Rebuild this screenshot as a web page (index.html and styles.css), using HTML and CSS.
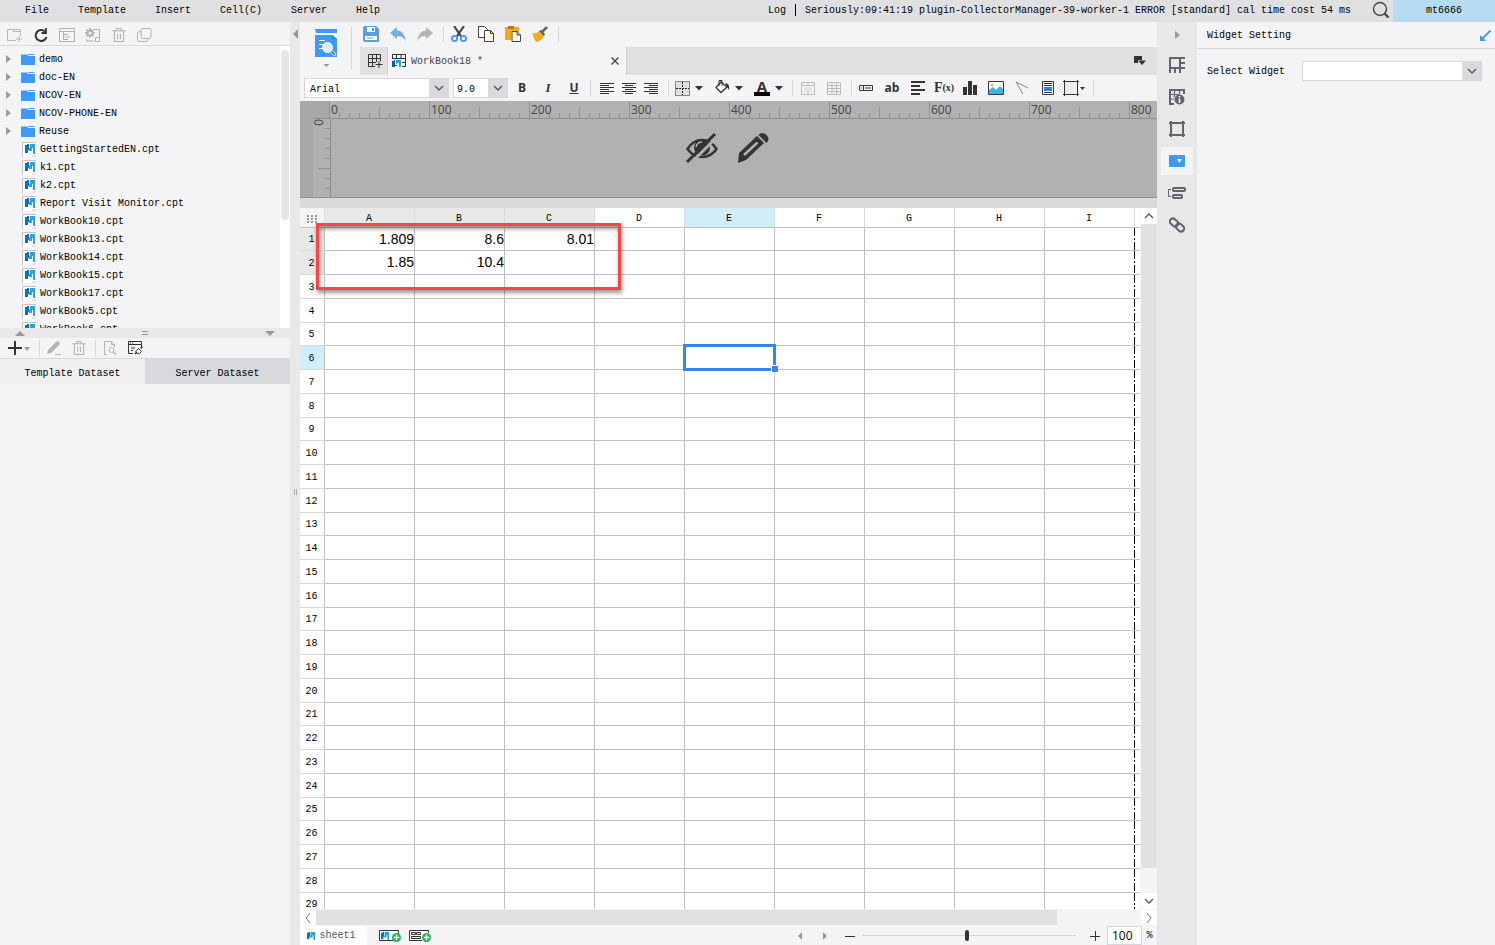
FILE: index.html
```html
<!DOCTYPE html>
<html lang="en">
<head>
  <meta charset="UTF-8">
  <meta name="viewport" content="width=device-width, initial-scale=1.0">
  <title>WorkBook18</title>
  <link rel="stylesheet" href="styles.css">
</head>
<body>
  <svg class="defs" width="0" height="0" aria-hidden="true">
    <symbol id="folder" viewBox="0 0 14 12"><path d="M0 1h6l1.500 1.500H14V11.500H0z" fill="#3d99fb"/><path d="M6.500 0.500H13.500v1H8z" fill="#3d99fb"/></symbol>
    <symbol id="logo" viewBox="0 0 10 10"><path d="M0 1h2V0h2v6H3v3H0z" fill="#0b6fc4"/><path d="M5 0h5v10H8V4H7v3H4V4h1z" fill="#27a3e4"/></symbol>
    <symbol id="cpt" viewBox="0 0 14 15"><path d="M0 0h14v15H0z" fill="#fff"/><path d="M.5 15V.5H14M10 14h4" fill="none" stroke="#c4c4c4"/><use href="#logo" x="3" y="2" width="10" height="10"/></symbol>
    <symbol id="chevron" viewBox="0 0 10 6"><path d="M1 1l4 4 4-4" fill="none" stroke="#555" stroke-width="1.300"/></symbol>
    <symbol id="caret" viewBox="0 0 8 5"><path d="M0 0h8L4 4.500z" fill="currentColor"/></symbol>
    <symbol id="right" viewBox="0 0 5 10"><path d="M0 1l5 4-5 4z" fill="#9c9c9c"/></symbol>
    <symbol id="trash" viewBox="0 0 14 15"><path d="M0 3h14M4.500 3V.5h5V3M2 3v11.500h10V3M5.500 6v6M8.500 6v6" fill="none" stroke="currentColor"/></symbol>
    <symbol id="plus-badge" viewBox="0 0 10 10"><circle cx="5" cy="5" r="5" fill="#1eb955"/><path d="M5 2v6M2 5h6" stroke="#fff" stroke-width="1.500"/></symbol>
  </svg>

  <header class="menubar">
    <nav class="menus">
      <button>File</button><button>Template</button><button>Insert</button><button>Cell(C)</button><button>Server</button><button>Help</button>
    </nav>
    <div class="log"><span>Log</span><span class="bar"></span><span>Seriously:09:41:19 plugin-CollectorManager-39-worker-1 ERROR [standard] cal time cost 54 ms</span></div>
    <button class="search" aria-label="Search"><svg width="18" height="18" viewBox="0 0 18 18" fill="none" stroke="#444"><circle cx="8" cy="8" r="6.500" stroke-width="1.400"/><path d="M12.500 12.500l4 4" stroke-width="2.400"/></svg></button>
    <button class="user">mt6666</button>
  </header>

  <main class="workspace">
    <aside class="sidebar">
      <div class="tree-tools">
        <button aria-label="New folder"><svg width="16" height="14" viewBox="0 0 16 14" fill="none" stroke="#b8b8b8"><path d="M9 12.500H.5v-11h5l1 2h7V8M6 1.500h7.500v2M12 8v6M9 11h6"/></svg></button>
        <button aria-label="Refresh"><svg width="14" height="14" viewBox="0 0 14 14" fill="none" stroke="#333" stroke-width="2"><path d="M11 3.500A5.500 5.500 0 1 0 12.500 9"/><path d="M12 0v5H7.500" stroke-width="1.800"/></svg></button>
        <button aria-label="Explorer"><svg width="16" height="14" viewBox="0 0 16 14" fill="none" stroke="#b0b0b0"><path d="M.5.5h15v13H.5zM.5 3.500h15M4.500 4v8M4.500 6.500H9M4.500 11.500H9M6 9h5"/></svg></button>
        <button aria-label="Manage"><svg width="16" height="14" viewBox="0 0 16 14" fill="none" stroke="#b0b0b0"><circle cx="5" cy="5" r="2.500" stroke-width="2"/><path d="M5 0v2M5 8v2M0 5h2M8 5h2M1.500 1.500l1.500 1.500M7 7l1.500 1.500M8.500 1.500L7 3M3 7L1.500 8.500" stroke-width="1.500"/><path d="M9 1.500h5.500V9M1.500 11v2H9M10.500 9.500h4v4h-4z"/></svg></button>
        <button aria-label="Delete"><svg width="14" height="14" color="#a8a8a8"><use href="#trash"/></svg></button>
        <button aria-label="Copy"><svg width="15" height="14" viewBox="0 0 15 14" fill="none" stroke="#b0b0b0"><rect x="4" y=".5" width="10" height="10" rx="2"/><path d="M4 3.500H2.500a2 2 0 0 0-2 2v6a2 2 0 0 0 2 2h6a2 2 0 0 0 2-2v-1"/></svg></button>
      </div>
      <div class="tree-wrap">
        <ul class="tree">
          <li class="dir"><svg class="arrow"><use href="#right"/></svg><svg class="pic"><use href="#folder"/></svg>demo</li>
          <li class="dir"><svg class="arrow"><use href="#right"/></svg><svg class="pic"><use href="#folder"/></svg>doc-EN</li>
          <li class="dir"><svg class="arrow"><use href="#right"/></svg><svg class="pic"><use href="#folder"/></svg>NCOV-EN</li>
          <li class="dir"><svg class="arrow"><use href="#right"/></svg><svg class="pic"><use href="#folder"/></svg>NCOV-PHONE-EN</li>
          <li class="dir"><svg class="arrow"><use href="#right"/></svg><svg class="pic"><use href="#folder"/></svg>Reuse</li>
          <li><svg class="pic"><use href="#cpt"/></svg>GettingStartedEN.cpt</li>
          <li><svg class="pic"><use href="#cpt"/></svg>k1.cpt</li>
          <li><svg class="pic"><use href="#cpt"/></svg>k2.cpt</li>
          <li><svg class="pic"><use href="#cpt"/></svg>Report Visit Monitor.cpt</li>
          <li><svg class="pic"><use href="#cpt"/></svg>WorkBook10.cpt</li>
          <li><svg class="pic"><use href="#cpt"/></svg>WorkBook13.cpt</li>
          <li><svg class="pic"><use href="#cpt"/></svg>WorkBook14.cpt</li>
          <li><svg class="pic"><use href="#cpt"/></svg>WorkBook15.cpt</li>
          <li><svg class="pic"><use href="#cpt"/></svg>WorkBook17.cpt</li>
          <li><svg class="pic"><use href="#cpt"/></svg>WorkBook5.cpt</li>
          <li><svg class="pic"><use href="#cpt"/></svg>WorkBook6.cpt</li>
        </ul>
        <div class="tree-scroll"><div class="tree-thumb"></div></div>
      </div>
      <div class="hsplit">
        <svg width="10" height="5" viewBox="0 0 10 5"><path d="M0 5l5-5 5 5z" fill="#999"/></svg>
        <svg width="6" height="4" viewBox="0 0 6 4"><path d="M0 .5h6M0 3.500h6" stroke="#999"/></svg>
        <svg width="10" height="5" viewBox="0 0 10 5"><path d="M0 0l5 5 5-5z" fill="#999"/></svg>
      </div>
      <div class="data-tools">
        <button aria-label="Add dataset"><svg width="22" height="14" viewBox="0 0 22 14"><path d="M7 0v14M0 7h14" stroke="#333" stroke-width="2"/><path d="M16 6h6l-3 4z" fill="#999"/></svg></button>
        <span class="sep"></span>
        <button aria-label="Edit"><svg width="14" height="14" viewBox="0 0 14 14"><path d="M0 13l1-4 8-8q1.500-1.500 3 0t0 3l-8 8z" fill="#b4b4b4"/><path d="M8 13.500h6" stroke="#b4b4b4"/></svg></button>
        <button aria-label="Remove"><svg width="14" height="14" color="#a8a8a8"><use href="#trash"/></svg></button>
        <span class="sep"></span>
        <button aria-label="Preview"><svg width="14" height="14" viewBox="0 0 14 14" fill="none" stroke="#b4b4b4"><path d="M4 13.500H1.500V.5h7l3 3V6M8.500.5v3h3"/><circle cx="8.500" cy="9" r="2.500"/><path d="M10.500 11l2.500 2.500" stroke-width="1.500"/></svg></button>
        <button aria-label="Connection"><svg width="15" height="14" viewBox="0 0 15 14" fill="none" stroke="#333"><path d="M5 12.500H.5V.5h13V7M.5 3.500h13M3 7h4M3 9.500h2M2 2h1M4 2h1"/><path d="M7 13l2-2M12.500 7.500l2-2" stroke-width="1.500"/><path d="M8.500 9.500l2-2 3 3-2 2q-1.500 1-3-.5t0-2.500z"/></svg></button>
      </div>
      <div class="data-tabs">
        <button class="active">Template Dataset</button>
        <button>Server Dataset</button>
      </div>
    </aside>

    <div class="vsplit">
      <svg width="5" height="10" viewBox="0 0 5 10"><path d="M5 0L0 5l5 5z" fill="#999"/></svg>
      <span class="grip"></span>
    </div>

    <section class="editor">
      <div class="top">
        <button class="preview" aria-label="Preview template">
          <svg width="22" height="38" viewBox="0 0 22 38"><path d="M0 0h22v4H1z" fill="#3d99fb"/><path d="M0 6h17l5 4v18H0z" fill="#3d99fb"/><path d="M17 6v4h5" fill="#2e7fd6"/><path d="M4 11.500h6M4 15.500h4M4 19.500h4" stroke="#fff"/><circle cx="12.500" cy="18.500" r="5" fill="#dcecfb" stroke="#fff"/><path d="M16.500 22.500l4 4" stroke="#fff" stroke-width="3"/><path d="M16.500 22.500l3.500 3.500" stroke="#555" stroke-width="1.500"/><path d="M8.500 35h6L11.500 38z" fill="#999"/></svg>
        </button>
        <div class="top-right">
          <div class="quick">
            <button aria-label="Save"><svg width="16" height="16" viewBox="0 0 16 16"><path d="M0 2q0-2 2-2h11l3 3v13H2q-2 0-2-2z" fill="#5b9ee0"/><path d="M4 1h8v5H4zM2 10h12v4H2z" fill="#fff"/><path d="M9 2h2v3H9z" fill="#5b9ee0"/><path d="M4 12h6" stroke="#5b9ee0"/></svg></button>
            <button aria-label="Undo"><svg width="16" height="16" viewBox="0 0 16 16"><path d="M7 1v3.500q8 .5 8.500 10.500-2-5-8.500-5V13L0 7z" fill="#74aee8"/></svg></button>
            <button aria-label="Redo"><svg width="16" height="16" viewBox="0 0 16 16"><path d="M9 1v3.500Q1 5 .5 15q2-5 8.500-5V13l7-6z" fill="#b5b5b5"/></svg></button>
            <span class="sep"></span>
            <button aria-label="Cut"><svg width="16" height="16" viewBox="0 0 16 16" fill="none"><path d="M3 0l7.500 11M13 0L5.500 11" stroke="#444" stroke-width="2.200"/><circle cx="3.500" cy="12.500" r="2.600" stroke="#3d99fb" stroke-width="1.800"/><circle cx="12.500" cy="12.500" r="2.600" stroke="#3d99fb" stroke-width="1.800"/></svg></button>
            <button aria-label="Copy"><svg width="16" height="16" viewBox="0 0 16 16" fill="#fff" stroke="#444"><path d="M.5.5h6l3 3v8h-9z"/><path d="M6.500 4.500h6l3 3v8h-9z" fill="#fff6df"/><path d="M12.500 4.500v3h3" fill="none"/></svg></button>
            <button aria-label="Paste"><svg width="16" height="16" viewBox="0 0 16 16"><path d="M0 1h14v5H6v8H0z" fill="#f4a81d"/><path d="M3 0h6v3H3z" fill="#b4791b"/><path d="M7 5.500h5l3.500 3.500v6.500H7z" fill="#fff6df" stroke="#444"/><path d="M12 5.500V9h3.500" fill="none" stroke="#444"/></svg></button>
            <button aria-label="Format painter"><svg width="16" height="16" viewBox="0 0 16 16"><path d="M0 7q5 1 7-2l5 5q-2 5-8 6Q2 13 0 7z" fill="#f4a81d"/><path d="M7 5l2-1 4 4-1 2z" fill="#555"/><path d="M10 6l5-5" stroke="#666" stroke-width="2.500"/></svg></button>
            <span class="sep"></span>
          </div>
          <div class="tabs">
            <button class="new-tab" aria-label="New workbook"><svg width="15" height="14" viewBox="0 0 15 14" fill="none" stroke="#333"><path d="M7 12.500H.5V.5h12V7M.5 4.500h12M.5 8.500H8M4.500.5v12M8.500.5V8M11 7v7M7.500 10.500h7"/></svg></button>
            <div class="tab">
              <svg width="14" height="14" viewBox="0 0 14 14" fill="none" stroke="#333"><path d="M.5 5V.5h13v12H10M.5 4.500h13M4.500.5v4M9 .5v4M10 8.500h3.500"/><path d="M0 7h2V6h1v5h2v1H3v1H0z" fill="#0b5ea8" stroke="none"/><path d="M4 6h5v7H7V9H5v1H4z" fill="#27a3e4" stroke="none"/></svg>
              <span>WorkBook18 *</span>
              <button aria-label="Close tab"><svg width="8" height="8" viewBox="0 0 8 8"><path d="M.5.5l7 7M7.500.5l-7 7" stroke="#444" stroke-width="1.300"/></svg></button>
            </div>
            <button class="tab-list" aria-label="Tab list"><svg width="12" height="10" viewBox="0 0 12 10"><path d="M0 0h8v4H4v3H0z" fill="#333"/><path d="M4 4.500h8L8 9z" fill="#333"/></svg></button>
          </div>
        </div>
      </div>

      <div class="format">
        <div class="drop font"><select aria-label="Font"><option>Arial</option></select><svg class="chev"><use href="#chevron"/></svg></div>
        <div class="drop size"><select aria-label="Font size"><option>9.0</option></select><svg class="chev"><use href="#chevron"/></svg></div>
        <div class="group letters">
          <button class="bold">B</button><button class="italic">I</button><button class="underline">U</button>
        </div>
        <span class="sep"></span>
        <div class="group aligns">
          <button aria-label="Align left"><svg width="14" height="11" viewBox="0 0 14 11"><path d="M0 .5h14M0 2.500h9M0 4.500h14M0 6.500h9M0 8.500h14M0 10.500h9" stroke="#333"/></svg></button>
          <button aria-label="Align center"><svg width="14" height="11" viewBox="0 0 14 11"><path d="M0 .5h14M3 2.500h8M0 4.500h14M3 6.500h8M0 8.500h14M3 10.500h8" stroke="#333"/></svg></button>
          <button aria-label="Align right"><svg width="14" height="11" viewBox="0 0 14 11"><path d="M0 .5h14M5 2.500h9M0 4.500h14M5 6.500h9M0 8.500h14M5 10.500h9" stroke="#333"/></svg></button>
        </div>
        <span class="sep"></span>
        <div class="group fills">
          <button aria-label="Border"><svg width="15" height="15" viewBox="0 0 15 15"><path d="M.5.5h14v14H.5z" fill="#e0e0e0" stroke="#222" stroke-dasharray="1 1"/><path d="M7.500 1v13M1 7.500h13" stroke="#222" stroke-dasharray="2 1"/></svg><svg class="caret"><use href="#caret"/></svg></button>
          <button aria-label="Fill color"><svg width="16" height="16" viewBox="0 0 16 16"><path d="M0 13h16v3H0z" fill="#fff"/><path d="M7 2l6 5-6 5.500L2 7.500z" fill="#fff" stroke="#333" stroke-width="1.300"/><path d="M5 6V.5h3V6" fill="none" stroke="#333"/><path d="M11 3q5 0 4 7l-2-3z" fill="#333"/></svg><svg class="caret"><use href="#caret"/></svg></button>
          <button aria-label="Font color" class="fontcolor"><span>A</span><svg class="caret"><use href="#caret"/></svg></button>
        </div>
        <span class="sep"></span>
        <div class="group cells">
          <button aria-label="Merge"><svg width="14" height="13" viewBox="0 0 14 13" fill="none" stroke="#bbb"><path d="M.5.5h13v12H.5zM.5 3.500h13M7 0v3M7 10v3"/><path d="M3 5h8v5H3z" fill="#e4e4e4" stroke="none"/></svg></button>
          <button aria-label="Unmerge"><svg width="14" height="13" viewBox="0 0 14 13" fill="none" stroke="#bbb"><path d="M.5.5h13v12H.5zM.5 3.500h13M.5 6.500h13M.5 9.500h13M5 0v13M9.500 0v13"/></svg></button>
        </div>
        <span class="sep"></span>
        <div class="group inserts">
          <button aria-label="Widget"><svg width="14" height="6" viewBox="0 0 14 6" fill="none" stroke="#333"><path d="M.5.5h13v5H.5zM2 3h1M4.500 1v4M6 3h6"/></svg></button>
          <button class="ab">ab</button>
          <button aria-label="Rich text"><svg width="14" height="14" viewBox="0 0 14 14"><path d="M0 1h14M0 5h9M0 9h14M0 13h9" stroke="#333" stroke-width="1.800"/></svg></button>
          <button class="fx">F<small>(x)</small></button>
          <button aria-label="Chart"><svg width="14" height="14" viewBox="0 0 14 14"><path d="M0 6h4v8H0zM5 0h4v14H5zM10 4h4v10h-4z" fill="#333"/></svg></button>
          <button aria-label="Image"><svg width="16" height="14" viewBox="0 0 16 14"><path d="M.5.5h15v13H.5z" fill="#fff" stroke="#333"/><path d="M1 13V9l4-3 3 3 4-4 3 3v5z" fill="#36b3f5"/><circle cx="4" cy="4" r="1.500" fill="#f9b233"/></svg></button>
          <button aria-label="Slanted header"><svg width="14" height="14" viewBox="0 0 14 14"><path d="M13 7L1 1l7 12" fill="none" stroke="#888"/></svg></button>
          <button aria-label="Sub report"><svg width="12" height="14" viewBox="0 0 12 14"><path d="M.5.5h11v13H.5z" fill="#fff" stroke="#333"/><path d="M2 2.500h8M2 4.500h8M2 11.500h8" stroke="#333"/><path d="M2 6h8v4H2z" fill="#1e86e5"/></svg></button>
          <button aria-label="Floating element"><svg width="22" height="16" viewBox="0 0 22 16"><path d="M1.500 1.500h13v13h-13z" fill="#eee" stroke="#333"/><path d="M0 1.500h16M0 14.500h16M1.500 0v16M14.500 0v16" stroke="#333"/><path d="M17 7h5l-2.500 3z" fill="#333"/></svg></button>
        </div>
        <span class="sep"></span>
      </div>

      <div class="params">
        <div class="ruler-h">
          <span>0</span><span>100</span><span>200</span><span>300</span><span>400</span><span>500</span><span>600</span><span>700</span><span>800</span>
        </div>
        <div class="ruler-v"><span>0</span></div>
        <div class="param-pane">
          <button aria-label="Hide parameter pane"><svg width="32" height="30" viewBox="0 0 32 30"><path d="M1.500 16Q7 7 16 7t14.500 9Q25 24 16 24T1.500 16z" fill="none" stroke="#333" stroke-width="2.500"/><circle cx="16" cy="14.500" r="8" fill="#333"/><path d="M10 14q1-5 6-5" fill="none" stroke="#b1b1b1" stroke-width="1.500"/><path d="M4 31L33 2" stroke="#b1b1b1" stroke-width="3"/><path d="M1 29L29 1" stroke="#333" stroke-width="3"/></svg></button>
          <button aria-label="Edit parameter pane"><svg width="32" height="30" viewBox="0 0 32 30"><path d="M2 20L20 3l7 7L9 27l-8 3z" fill="#333"/><path d="M7 22L20.500 9.500" stroke="#b1b1b1" stroke-width="2.500"/><path d="M21.500 2q4-4 8 0t0 8z" fill="#333"/></svg></button>
        </div>
      </div>

      <div class="sheet-area">
        <div class="sheet">
          <table class="grid" id="grid">
            <colgroup><col class="c-num"><col class="c"><col class="c"><col class="c"><col class="c"><col class="c"><col class="c"><col class="c"><col class="c"><col class="c"><col></colgroup>
            <thead><tr></tr></thead>
            <tbody></tbody>
          </table>
          <div class="highlight"></div>
        </div>
        <div class="vscroll">
          <button aria-label="Scroll up"><svg class="chev flip"><use href="#chevron"/></svg></button>
          <div class="vthumb"></div>
          <button aria-label="Scroll down"><svg class="chev"><use href="#chevron"/></svg></button>
        </div>
      </div>

      <div class="hscroll">
        <button aria-label="Scroll left"><svg width="6" height="10" viewBox="0 0 6 10"><path d="M5 0L1 5l4 5" fill="none" stroke="#777"/></svg></button>
        <div class="hthumb"></div>
        <button aria-label="Scroll right"><svg width="6" height="10" viewBox="0 0 6 10"><path d="M1 0l4 5-4 5" fill="none" stroke="#777"/></svg></button>
      </div>

      <footer class="status">
        <button class="sheet-tab"><svg width="8" height="8"><use href="#logo"/></svg>sheet1</button>
        <button class="add" aria-label="Add sheet"><svg width="23" height="14" viewBox="0 0 23 14"><path d="M.5 1.500h19v10H.5z" fill="#fff" stroke="#333"/><use href="#logo" x="2" y="3" width="8" height="8"/><use href="#plus-badge" x="13" y="4" width="9" height="9"/></svg></button>
        <button class="add" aria-label="Add form"><svg width="23" height="14" viewBox="0 0 23 14"><path d="M13 11.500H.5v-10h19V4M2.500 3.500h4v2h-4zM7.500 3.500h4v2h-4zM2.500 7.500h9v2h-9z" fill="#fff" stroke="#333"/><use href="#plus-badge" x="13" y="4" width="9" height="9"/></svg></button>
        <div class="zoom">
          <button aria-label="Previous"><svg width="4" height="8" viewBox="0 0 4 8"><path d="M4 0v8L0 4z" fill="#999"/></svg></button>
          <button aria-label="Next"><svg width="4" height="8" viewBox="0 0 4 8"><path d="M0 0v8l4-4z" fill="#999"/></svg></button>
          <button aria-label="Zoom out"><svg width="10" height="10" viewBox="0 0 10 10"><path d="M0 5.500h10" stroke="#333"/></svg></button>
          <input type="range" aria-label="Zoom" min="0" max="100" value="49">
          <button aria-label="Zoom in"><svg width="10" height="10" viewBox="0 0 10 10"><path d="M0 5.500h10M5.500 0v10" stroke="#333"/></svg></button>
          <input type="text" id="percent" value="100"><label for="percent">%</label>
        </div>
      </footer>
    </section>

    <nav class="strip">
      <button class="collapse" aria-label="Collapse"><svg width="5" height="10"><use href="#right"/></svg></button>
      <button aria-label="Cell element"><svg width="16" height="16" viewBox="0 0 16 16" fill="none" stroke="#5f6470" stroke-width="2"><path d="M1 16V1h10v10H1M11 1h5M11 6h5M11 11h5M6 11v5M11 11v5"/></svg></button>
      <button aria-label="Cell attributes"><svg width="16" height="16" viewBox="0 0 16 16" fill="none" stroke="#5f6470"><path d="M5 15H1V1h14v4" stroke-width="2"/><path d="M1 5.500h9M1 10h4M5.500 1v7M10.500 1v4" stroke-width="1.200"/><circle cx="10.500" cy="10.500" r="5" fill="#5f6470" stroke="none"/><path d="M10.500 7v1.500M10.500 9.500V14" stroke="#fff" stroke-width="1.500"/></svg></button>
      <button aria-label="Floating element"><svg width="16" height="16" viewBox="0 0 16 16" fill="none" stroke="#5f6470" stroke-width="2"><path d="M2 2h12v12H2z"/><path d="M0 2h3M13 2h3M0 14h3M13 14h3M2 0v3M14 0v3M2 13v3M14 13v3"/></svg></button>
      <button class="active" aria-label="Widget setting"><svg width="16" height="12" viewBox="0 0 16 12"><rect width="16" height="12" rx="1" fill="#3d99fb"/><path d="M8 4h5l-2.500 4z" fill="#fff"/></svg></button>
      <button aria-label="Condition"><svg width="18" height="12" viewBox="0 0 18 12" fill="none" stroke="#5f6470"><path d="M3 2.500H.5v7H3"/><rect x="5" y="1" width="12" height="3" rx="1" stroke-width="2"/><rect x="5" y="8" width="9" height="3" rx="1" stroke-width="2"/></svg></button>
      <button aria-label="Hyperlink"><svg width="16" height="16" viewBox="0 0 16 16" fill="none" stroke="#5f6470" stroke-width="2"><rect x="0.500" y="2.500" width="9" height="6" rx="3" transform="rotate(42 5 5.500)"/><rect x="6.500" y="7.500" width="9" height="6" rx="3" transform="rotate(42 11 10.500)"/></svg></button>
    </nav>

    <aside class="settings">
      <div class="settings-title"><span>Widget Setting</span><button aria-label="Detach"><svg width="12" height="12" viewBox="0 0 12 12"><path d="M11.500.5L3 9" stroke="#3d99fb" stroke-width="1.800"/><path d="M1 5v6h6z" fill="#3d99fb"/></svg></button></div>
      <div class="field">
        <label for="widget">Select Widget</label>
        <div class="drop"><select id="widget"><option></option></select><svg class="chev"><use href="#chevron"/></svg></div>
      </div>
    </aside>
  </main>

  <script src="script.js"></script>
</body>
</html>
```
FILE: styles.css
```css
* {
  box-sizing: border-box;
}
body {
  margin: 0;
  height: 100vh;
  display: flex;
  flex-direction: column;
  overflow: hidden;
  font: 10px/18px "Liberation Mono", monospace;
  color: #000;
  background: #f4f4f7;
}
.defs {
  position: absolute;
}
button {
  display: flex;
  align-items: center;
  justify-content: center;
  padding: 0;
  border: 0;
  background: none;
  font: inherit;
  color: inherit;
  cursor: pointer;
}
svg {
  display: block;
  flex: none;
}
.sep {
  width: 1px;
  height: 16px;
  background: #d6d6da;
}

/* menu bar */
.menubar {
  display: flex;
  flex: none;
  height: 22px;
  background: #e0e0e3;
}
.menus {
  display: flex;
  flex: 1;
  gap: 29px;
  padding-left: 25px;
}
.log {
  display: flex;
  align-items: center;
  gap: 9px;
  white-space: nowrap;
}
.log .bar {
  width: 1px;
  height: 12px;
  margin-bottom: 2px;
  background: #000;
}
.search {
  width: 42px;
  padding-left: 17px;
  padding-bottom: 2px;
}
.user {
  width: 102px;
  background: #b7dcf2;
}

.workspace {
  display: flex;
  flex: 1;
  min-height: 0;
}

/* left side */
.sidebar {
  display: flex;
  flex-direction: column;
  width: 290px;
  flex: none;
}
.tree-tools {
  display: flex;
  align-items: center;
  gap: 11px;
  height: 24px;
  padding: 2px 7px 0;
  border-bottom: 1px solid #d9d9dc;
}
.tree-tools button {
  width: 15px;
}
.tree-wrap {
  display: flex;
  height: 282px;
  overflow: hidden;
}
.tree {
  flex: 1;
  margin: 0;
  padding: 4px 0 0 22px;
  list-style: none;
}
.tree li {
  display: flex;
  align-items: center;
  gap: 4px;
  height: 18px;
  padding-top: 2px;
  white-space: pre;
}
.tree .dir {
  margin-left: -16px;
}
.tree .arrow {
  width: 5px;
  height: 10px;
  margin: 0 6px 2px 0;
}
.tree .pic {
  width: 14px;
  height: 15px;
  margin-bottom: 2px;
}
.tree-scroll {
  width: 10px;
  padding-top: 4px;
  background: #fff;
}
.tree-thumb {
  width: 8px;
  height: 170px;
  margin-left: 1px;
  border-radius: 4px;
  background: #e5e5e5;
}
.hsplit {
  display: flex;
  align-items: center;
  justify-content: space-between;
  height: 10px;
  padding: 0 15px;
  background: #e8e8e8;
}
.data-tools {
  display: flex;
  align-items: center;
  gap: 9px;
  height: 21px;
  padding-left: 8px;
  border-bottom: 1px solid #d9d9dc;
}
.data-tools button + button {
  margin-left: 2px;
}
.data-tools .sep + button {
  margin-left: -2px;
}
.data-tabs {
  display: grid;
  grid-template-columns: 1fr 1fr;
  height: 25px;
}
.data-tabs button {
  padding-top: 4px;
  background: #d8d9dd;
}
.data-tabs .active {
  background: #f0f0f3;
}
.vsplit {
  display: flex;
  flex-direction: column;
  align-items: center;
  width: 10px;
  flex: none;
  padding-top: 7px;
  background: #e8e8e8;
}
.grip {
  width: 3px;
  height: 6px;
  margin: auto;
  border: solid #aaa;
  border-width: 0 1px;
}

/* editor */
.editor {
  display: flex;
  flex-direction: column;
  flex: 1;
  min-width: 0;
}
.top {
  display: flex;
  height: 53px;
  flex: none;
}
.preview {
  width: 52px;
  margin: 4px 8px 6px 0;
  border-right: 1px solid #d6d6da;
}
.top-right {
  display: flex;
  flex-direction: column;
  flex: 1;
}
.quick {
  display: flex;
  align-items: center;
  gap: 11px;
  height: 25px;
  padding: 0 0 2px 3px;
}
.quick .sep {
  margin: 0 -4px 0 -1px;
}
.tabs {
  display: flex;
  height: 28px;
  background: #e0e0e3;
}
.new-tab {
  width: 27px;
  padding-left: 4px;
}
.tab {
  display: flex;
  align-items: center;
  width: 240px;
  padding: 0 7px 0 4px;
  border: solid #d0d0d4;
  border-width: 0 1px;
  background: #f4f4f7;
  color: #444;
}
.tab span {
  flex: 1;
  padding: 2px 0 0 5px;
}
.tab-list {
  margin-left: auto;
  padding-right: 11px;
}
.format {
  display: flex;
  align-items: center;
  height: 26px;
  flex: none;
  padding-left: 4px;
}
.drop {
  position: relative;
  height: 20px;
}
.drop select {
  appearance: none;
  width: 100%;
  height: 100%;
  padding: 2px 20px 0 5px;
  border: 1px solid #d6d7db;
  border-radius: 0;
  background: linear-gradient(#d9dadd, #d9dadd) right / 19px 100% no-repeat #fff;
  font: inherit;
  color: #000;
}
.chev {
  width: 10px;
  height: 6px;
}
.flip {
  transform: scaleY(-1);
}
.drop .chev {
  position: absolute;
  right: 5px;
  top: 7px;
  pointer-events: none;
}
.font {
  width: 145px;
  margin-right: 4px;
}
.size {
  width: 55px;
}
.size select {
  padding-left: 3px;
}
.group {
  display: flex;
  align-items: center;
  color: #333;
}
.letters {
  padding: 0 3px 0 1px;
}
.letters button {
  width: 26px;
  font: bold 12px/16px "Open Sans", sans-serif;
}
.letters .italic {
  font-family: "Liberation Serif", serif;
  font-size: 13px;
  font-style: italic;
}
.letters .underline {
  text-decoration: underline;
}
.aligns {
  gap: 8px;
  padding: 0 10px 0 9px;
}
.fills {
  gap: 12px;
  padding: 0 9px 0 6px;
}
.fills button {
  gap: 5px;
}
.fills button + button {
  margin-left: -1px;
}
.caret {
  width: 8px;
  height: 5px;
}
.fontcolor span {
  width: 16px;
  height: 16px;
  border-bottom: 4px solid #000;
  font: bold 15px/12px "Open Sans", sans-serif;
}
.cells {
  gap: 12px;
  padding: 0 10px 0 8px;
}
.inserts {
  padding: 0 6px 0 1px;
}
.inserts button {
  width: 26px;
}
.inserts .ab {
  font: bold 12px/16px "Open Sans", sans-serif;
}
.inserts .fx {
  font: bold 14px/16px "Liberation Serif", serif;
}
.inserts small {
  font-size: 10px;
}

/* parameter pane with rulers */
.params {
  display: grid;
  grid-template: 17px 79px / 13px 17px 1fr;
  flex: none;
  background: #a8a8a8;
  border-bottom: 1px solid #8e8e8e;
  overflow: hidden;
}
.ruler-h {
  grid-area: 1 / 3;
  display: flex;
  margin-left: -1px;
  overflow: hidden;
  background:
    repeating-linear-gradient(90deg, #929292 0 1px, transparent 1px 100px) 0 0 / 100% 17px no-repeat,
    repeating-linear-gradient(90deg, #929292 0 1px, transparent 1px 50px) 0 6px / 100% 11px no-repeat,
    repeating-linear-gradient(90deg, #929292 0 1px, transparent 1px 10px) 0 12px / 100% 5px no-repeat,
    #b1b1b1;
  font: 12px/17px "Open Sans", sans-serif;
  color: #444;
}
.ruler-h span {
  flex: none;
  width: 100px;
  padding-left: 2px;
}
.ruler-v {
  grid-area: 2 / 2;
  border-top: 1px solid #8e8e8e;
  background:
    repeating-linear-gradient(transparent 0 49px, #929292 49px 50px) 5px 0 / 12px 100% no-repeat,
    repeating-linear-gradient(transparent 0 9px, #929292 9px 10px) 12px 0 / 5px 100% no-repeat,
    #b1b1b1;
  font: 12px/12px "Open Sans", sans-serif;
  color: #444;
  writing-mode: vertical-rl;
}
.ruler-v span {
  display: block;
  margin-right: 6px;
}
.param-pane {
  grid-area: 2 / 3;
  display: flex;
  justify-content: center;
  align-items: flex-start;
  gap: 19px;
  padding: 14px 33px 0 0;
  border: solid #8e8e8e;
  border-width: 1px 0 0 1px;
  background: #b1b1b1;
}

/* spreadsheet */
.sheet-area {
  display: flex;
  flex: 1;
  min-height: 0;
  border-top: 10px solid #dadadc;
}
.sheet {
  position: relative;
  flex: 1;
  min-width: 0;
  overflow: hidden;
  background: #fff;
}
.grid {
  width: 100%;
  table-layout: fixed;
  border-spacing: 0;
}
.c-num {
  width: 25px;
}
.c {
  width: 90px;
}
.grid tr {
  height: 24px;
}
.grid thead tr {
  height: 20px;
}
.grid tbody tr:nth-child(4n + 1) {
  height: 23px;
}
.grid th,
.grid td {
  padding: 0;
  border: solid #c0c0c0;
  border-width: 0 1px 1px 0;
}
.grid th {
  font-weight: normal;
  line-height: 16px;
}
.grid thead th {
  border-right-color: #dadade;
  padding: 3px 1px 0 0;
}
.grid tbody th {
  border-bottom-color: #dadade;
  padding: 2px 1px 0 0;
}
.grid th.used {
  background: #e8e8e8;
}
.grid th.current {
  background: #cfeefa;
}
.grid .corner {
  background: #f4f4f7;
}
.grid .corner svg {
  margin: auto;
}
.grid tr > :last-child {
  border-right: 0;
}
.grid td {
  font: 14px/17px "Liberation Sans", Arial, sans-serif;
  text-align: right;
}
/* page break line */
.grid td:nth-child(10) {
  border-right: 0;
  background: repeating-linear-gradient(#000 0 8px, #fff 8px 10px, #000 10px 12px, #fff 12px 14px) right / 1px 100% no-repeat;
}
.grid .selected {
  position: relative;
}
.selected::before {
  content: "";
  position: absolute;
  inset: -2px;
  border: 3px solid #3485f0;
}
.selected::after {
  content: "";
  position: absolute;
  right: -4px;
  bottom: -3px;
  width: 6px;
  height: 6px;
  border: solid #fff;
  border-width: 1px 0 0 1px;
  background: #3485f0;
}
.highlight {
  position: absolute;
  left: 16px;
  top: 15px;
  width: 305px;
  height: 67px;
  border: 3px solid #fb4444;
  box-shadow: 1px 3px 4px rgba(0, 0, 0, .4), inset 1px 3px 4px rgba(0, 0, 0, .4);
}
.vscroll {
  display: flex;
  flex-direction: column;
  width: 17px;
  padding-left: 1px;
}
.vscroll button {
  height: 16px;
  background: #fff;
}
.vthumb {
  flex: 0 1 644px;
  margin-bottom: auto;
  background: #e1e1e1;
}
.hscroll {
  display: flex;
  height: 17px;
  flex: none;
  padding: 1px 0;
}
.hscroll button {
  width: 16px;
  background: #fff;
}
.hthumb {
  flex: 0 1 741px;
  margin-right: auto;
  background: #e1e1e1;
}
.status {
  display: flex;
  align-items: center;
  height: 19px;
  flex: none;
}
.sheet-tab {
  gap: 4px;
  width: 67px;
  height: 100%;
  margin-right: 12px;
  padding-right: 4px;
  background: #fff;
  color: #555;
}
.add {
  margin-right: 7px;
}
.zoom {
  display: flex;
  align-items: center;
  height: 100%;
  margin-left: auto;
}
.zoom button {
  width: 25px;
}
.zoom input[type="range"] {
  appearance: none;
  width: 214px;
  height: 12px;
  margin: 0 6px 0 0;
  background: linear-gradient(#d4d4d8, #d4d4d8) center / 100% 1px no-repeat;
}
.zoom input[type="range"]::-webkit-slider-thumb {
  appearance: none;
  width: 4px;
  height: 11px;
  border-radius: 2px;
  background: #333;
}
.zoom input[type="text"] {
  width: 35px;
  height: 19px;
  padding: 0 4px;
  border: 1px solid #d6d7db;
  background: #fff;
  font: 12px/16px "Open Sans", sans-serif;
}
.zoom label {
  width: 15px;
  text-align: center;
}

/* right side */
.strip {
  display: flex;
  flex-direction: column;
  align-items: center;
  gap: 4px;
  width: 40px;
  flex: none;
  background: #e8e8e8;
}
.strip button {
  width: 32px;
  height: 28px;
}
.strip .collapse {
  height: 25px;
}
.strip .active {
  background: #f4f4f7;
}
.settings {
  width: 298px;
  flex: none;
}
.settings-title {
  display: flex;
  align-items: center;
  justify-content: space-between;
  height: 27px;
  padding: 1px 4px 0 10px;
  border-bottom: 1px solid #d9d9dc;
}
.field {
  display: flex;
  align-items: center;
  gap: 17px;
  padding: 12px 13px 0 10px;
}
.field label {
  padding-top: 2px;
}
.field .drop {
  flex: 1;
}
```
FILE: script.js
```javascript
const columns = ['A', 'B', 'C', 'D', 'E', 'F', 'G', 'H', 'I', ''];
const values = {
  A1: '1.809', B1: '8.6', C1: '8.01',
  A2: '1.85', B2: '10.4'
};
const current = { column: 'E', row: 6 };

const headRow = document.querySelector('#grid thead tr');
const body = document.querySelector('#grid tbody');

// Column letters
headRow.innerHTML = '<th class="corner"><svg width="10" height="8" viewBox="0 0 10 8"><path d="M0 1h10M0 4h10M0 7h10" stroke="#999" stroke-width="2" stroke-dasharray="2 2"/></svg></th>';
columns.forEach((name, i) => {
  const th = document.createElement('th');
  th.textContent = name;
  if (i < 3) th.className = 'used';
  if (name === current.column) th.className = 'current';
  headRow.appendChild(th);
});

// Numbered rows
for (let row = 1; row <= 29; row++) {
  const tr = document.createElement('tr');
  const th = document.createElement('th');
  th.textContent = row;
  if (row < 3) th.className = 'used';
  if (row === current.row) th.className = 'current';
  tr.appendChild(th);
  columns.forEach((name) => {
    const td = document.createElement('td');
    td.textContent = values[name + row] || '';
    if (name === current.column && row === current.row) td.className = 'selected';
    tr.appendChild(td);
  });
  body.appendChild(tr);
}
```
